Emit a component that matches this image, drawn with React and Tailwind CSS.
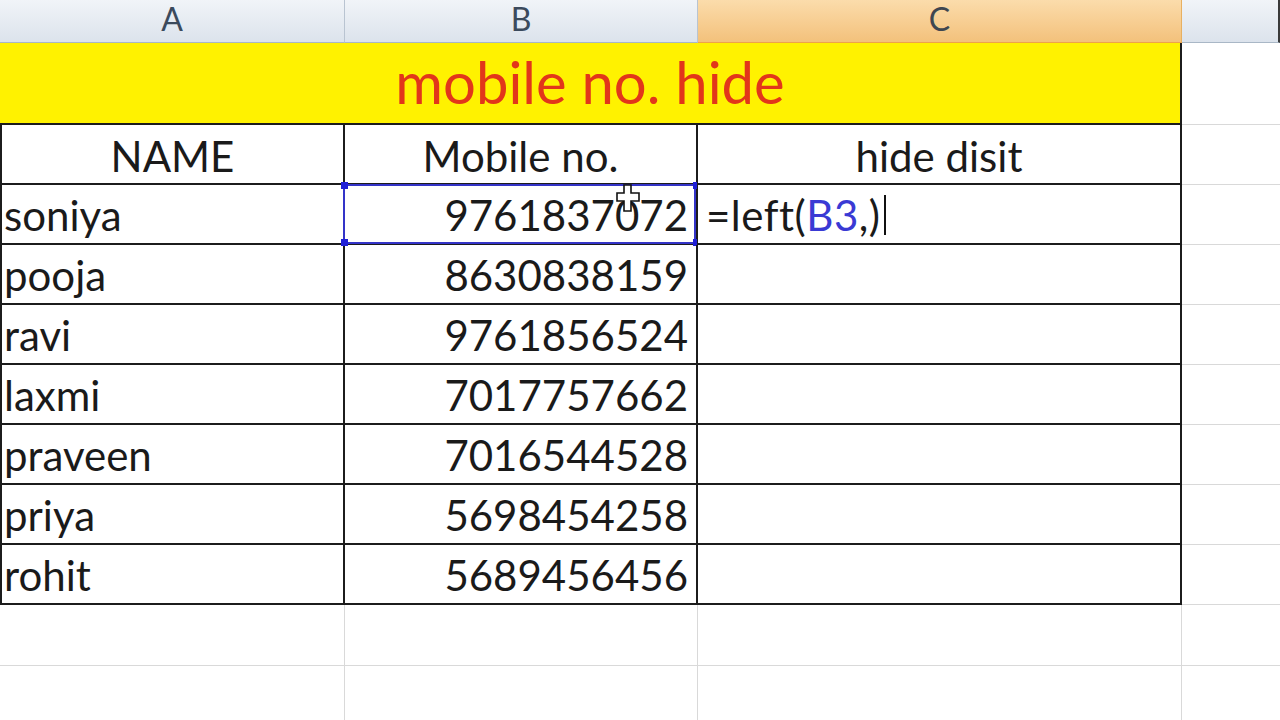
import React from "react";

const cols = "grid grid-cols-[345px_353px_484px_1fr]";
const font = { fontFamily: "Lato, 'Open Sans', sans-serif" };

const people = [
  { name: "soniya", mobile: "9761837072" },
  { name: "pooja", mobile: "8630838159" },
  { name: "ravi", mobile: "9761856524" },
  { name: "laxmi", mobile: "7017757662" },
  { name: "praveen", mobile: "7016544528" },
  { name: "priya", mobile: "5698454258" },
  { name: "rohit", mobile: "5689456456" },
];

const ColHead = ({ label, active }) => (
  <div
    className={
      active
        ? "flex items-start justify-center border-r border-b border-r-[#e8b061] border-b-[#eea24a] bg-gradient-to-b from-[#fbdcab] to-[#f3c17b] text-[32px] leading-[38px] text-[#3f4650]"
        : "flex items-start justify-center border-r border-b border-r-[#b9c4d1] border-b-[#a9b7c6] bg-gradient-to-b from-[#f1f4f8] to-[#dce3ec] text-[32px] leading-[38px] text-[#3b4a5c]"
    }
  >
    {label}
  </div>
);

// the little white "fat cross" pointer excel shows over cells
const CrossCursor = () => (
  <svg
    className="absolute left-[616px] top-[184px]"
    width="24"
    height="28"
    viewBox="0 0 24 28"
  >
    <path
      d="M8 1 H15 V9 H23 V17 H15 V27 H8 V17 H1 V9 H8 Z"
      fill="#fff"
      stroke="#111"
      strokeWidth="1.6"
      strokeLinejoin="miter"
    />
  </svg>
);

const App = () => {
  return (
    <div
      className="relative h-[720px] w-[1280px] overflow-hidden bg-white leading-none text-[#1a1a1a]"
      style={font}
    >
      {/* column letters */}
      <div className={`${cols} h-[43px] grid-rows-[43px]`}>
        <ColHead label="A" />
        <ColHead label="B" />
        <ColHead label="C" active />
        <div className="border-b border-r-2 border-b-[#a9b7c6] border-r-[#3a3a3a] bg-gradient-to-b from-[#f1f4f8] to-[#dce3ec]" />
      </div>

      {/* title row */}
      <div className={`${cols} h-[82px] grid-rows-[82px]`}>
        <div className="col-span-3 flex items-center justify-center border-r-2 border-b-2 border-[#1c1c1c] bg-[#fff200] pb-[2px] text-[58px] text-[#e2361a]">
          mobile no. hide
        </div>
        <div className="border-b border-[#d9d9d9]" />
      </div>

      {/* header row */}
      <div className={`${cols} h-[60px] grid-rows-[60px] text-[42px]`}>
        <div className="flex items-center justify-center border-l-2 border-r-2 border-b-2 border-[#1c1c1c] pt-[3px]">
          NAME
        </div>
        <div className="flex items-center justify-center border-r-2 border-b-2 border-[#1c1c1c] pt-[3px]">
          Mobile no.
        </div>
        <div className="flex items-center justify-center border-r-2 border-b-2 border-[#1c1c1c] pt-[3px]">
          hide disit
        </div>
        <div className="border-b border-[#d9d9d9]" />
      </div>

      {people.map((p, i) => (
        <div
          key={p.name}
          className={`${cols} h-[60px] grid-rows-[60px] text-[42px]`}
        >
          <div className="flex items-center border-l-2 border-r-2 border-b-2 border-[#1c1c1c] pl-[2px] pt-[2px]">
            {p.name}
          </div>
          <div className="relative flex items-center justify-end border-r-2 border-b-2 border-[#1c1c1c] pr-[8px] pt-[2px]">
            {p.mobile}
            {i === 0 && (
              <div className="absolute -left-[2px] -top-[1px] h-[60px] w-[353px] border-2 border-[#3434c8]">
                <span className="absolute -left-[4px] -top-[4px] h-[7px] w-[7px] bg-[#1f1fd6]" />
                <span className="absolute -left-[4px] -bottom-[4px] h-[7px] w-[7px] bg-[#1f1fd6]" />
                <span className="absolute -right-[3px] -top-[4px] h-[7px] w-[4px] bg-[#1f1fd6]" />
                <span className="absolute -right-[3px] -bottom-[4px] h-[7px] w-[4px] bg-[#1f1fd6]" />
              </div>
            )}
          </div>
          <div className="flex items-center border-r-2 border-b-2 border-[#1c1c1c] pl-[8px] pt-[2px] tracking-[0.5px]">
            {i === 0 && (
              <>
                <span>=left(</span>
                <span className="text-[#3a3ad4]">B3</span>
                <span>,)</span>
                <span className="ml-[3px] h-[40px] w-[2px] bg-[#111]" />
              </>
            )}
          </div>
          <div className="border-b border-[#d9d9d9]" />
        </div>
      ))}

      {/* empty rows below the table */}
      {[0, 1].map((r) => (
        <div key={r} className={`${cols} h-[61px] grid-rows-[61px]`}>
          <div className="border-r border-b border-[#d9d9d9]" />
          <div className="border-r border-b border-[#d9d9d9]" />
          <div className="border-r border-b border-[#d9d9d9]" />
          <div className="border-b border-[#d9d9d9]" />
        </div>
      ))}

      <CrossCursor />
    </div>
  );
};

export default App;
